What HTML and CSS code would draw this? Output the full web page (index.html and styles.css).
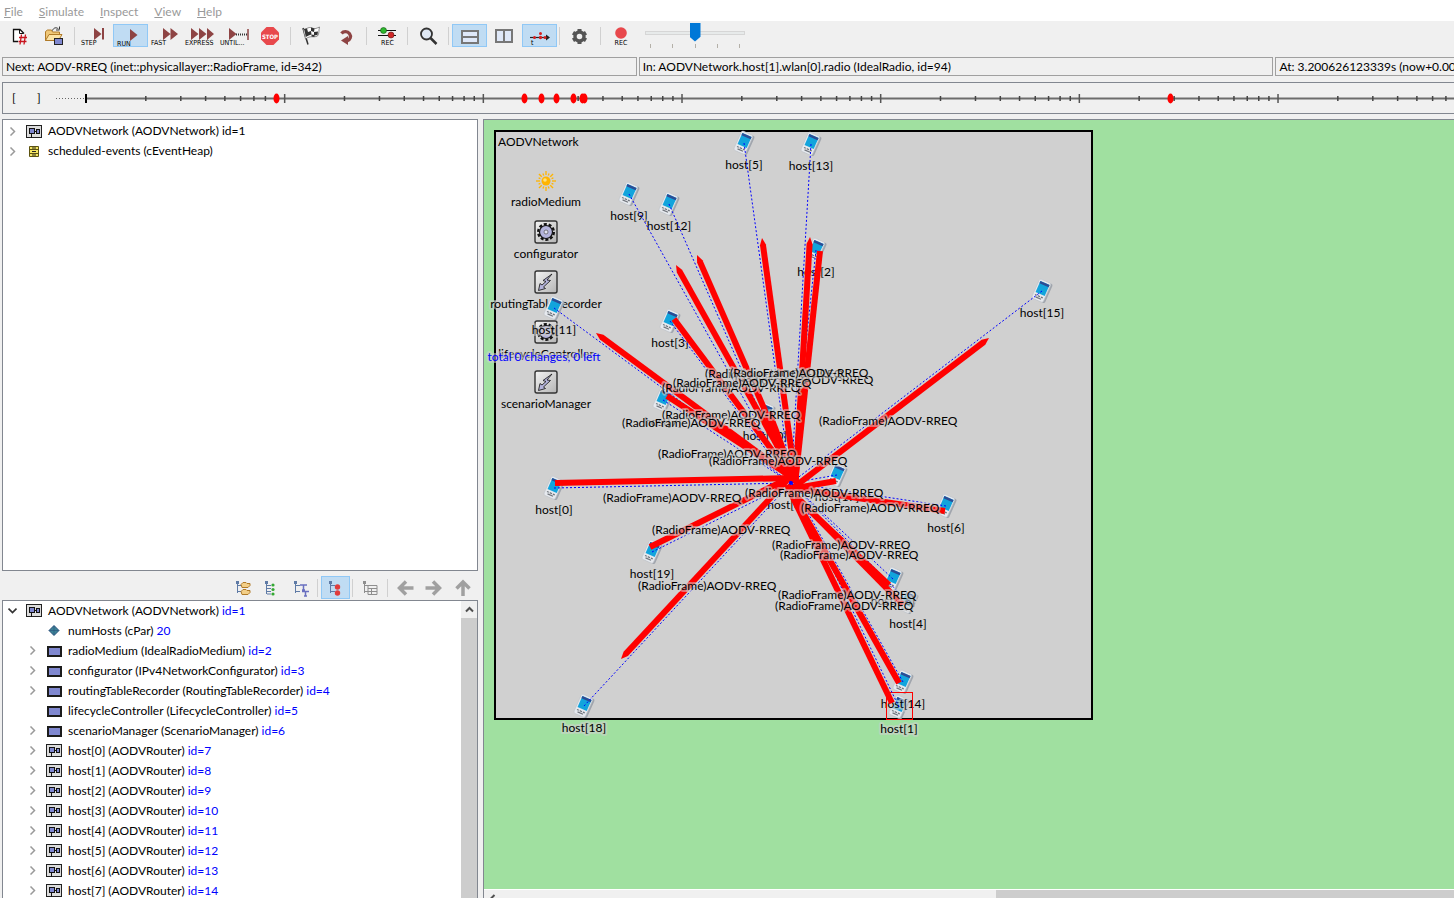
FILE: index.html
```html
<!DOCTYPE html>
<html lang="en">
<head>
    <meta charset="utf-8">
    <meta name="viewport" content="width=device-width">
    <title>AODVNetwork</title>
    <link rel="stylesheet" href="styles.css">
</head>
<body>
<svg class="defs" aria-hidden="true">
    <defs>
        <linearGradient id="metal" x1="0" y1="0" x2="1" y2="1">
            <stop offset="0" stop-color="#f4f4f4"/>
            <stop offset="1" stop-color="#b4b4b4"/>
        </linearGradient>
        <symbol id="net" viewBox="0 0 16 13">
            <rect x=".5" y=".5" width="15" height="12" fill="#dcdcdc" stroke="#222"/>
            <rect x="3.5" y="3.5" width="5" height="5" fill="#8088d0" stroke="#111"/>
            <rect x="10.5" y="4.5" width="3" height="4" fill="#8088d0" stroke="#111"/>
            <path d="M8 6.500h3M5.500 9v4" stroke="#111"/>
        </symbol>
        <symbol id="module" viewBox="0 0 16 13">
            <rect x="2" y="3" width="13" height="9" fill="#8088d0" stroke="#1c1c1c" stroke-width="2"/>
        </symbol>
        <symbol id="par" viewBox="0 0 16 13">
            <path d="M8 1.500l5 5-5 5-5-5z" fill="#3c8296" stroke="#28507c"/>
            <path d="M3 6.500h10M8 2v9" stroke="#28507c" stroke-width=".6"/>
        </symbol>
        <symbol id="heap" viewBox="0 0 16 13">
            <path d="M3.500 1.500h9v10h-9z" fill="#f5e663" stroke="#5c5310"/>
            <path d="M4 4.500h8M4 8.500h8" stroke="#5c5310"/>
            <path d="M6 3h4M6 6.500h4M6 10h4" stroke="#222"/>
        </symbol>
        <symbol id="closed" viewBox="0 0 9 9"><path d="M2.500 .5l4 4-4 4" fill="none" stroke="#9a9a9a" stroke-width="1.500"/></symbol>
        <symbol id="opened" viewBox="0 0 9 9"><path d="M.5 2.500l4 4 4-4" fill="none" stroke="#333" stroke-width="1.700"/></symbol>
        <symbol id="branch" viewBox="0 0 29 23">
            <path d="M9.500 7v10M10 9.500h4M10 15.500h4" fill="none" stroke="#5f7ba6"/>
            <rect x="8" y="5" width="3" height="3" fill="#5f7ba6"/>
        </symbol>
    </defs>
</svg>

<nav class="menubar">
    <button><u>F</u>ile</button>
    <button><u>S</u>imulate</button>
    <button><u>I</u>nspect</button>
    <button><u>V</u>iew</button>
    <button><u>H</u>elp</button>
</nav>

<div class="toolbar">
    <button class="tool" aria-label="New run"><svg viewBox="0 0 35 23">
        <path d="M16 17.500h-4.500v-12h6.500l4 4" fill="#fff" stroke="#111" stroke-width="1.300"/><path d="M17.500 5.500v4h4" fill="none" stroke="#111"/>
        <path d="M19.500 10.500l-1.500 10M23.500 10.500l-1.500 10M17 13.500h8M16.500 17.500h8" stroke="#c8141e" stroke-width="1.300"/></svg></button>
    <button class="tool" aria-label="Open"><svg viewBox="0 0 35 23">
        <path d="M8.500 16.500v-9l2-1.500h4l1 2h7v8z" fill="#f0c878" stroke="#b07a28"/><path d="M8.500 16.500l3.500-6h13l-3.500 6z" fill="#fbe3a6" stroke="#b07a28"/>
        <path d="M15.500 6.500c1-3 4-3.500 6-1.500M22.500 5.500v-3M22.500 6h-3.500" fill="none" stroke="#333"/>
        <rect x="17.500" y="14.500" width="8" height="6" fill="#8088d0" stroke="#222"/></svg></button>
    <span class="sep"></span>
    <button class="tool" aria-label="Step"><svg viewBox="0 0 35 23">
        <path d="M16 4l7.500 6-7.500 6z" class="play"/><path d="M25 4v11.500" stroke="#8e4444" stroke-width="2"/><text x="3" y="21">STEP</text></svg></button>
    <button class="tool on" aria-label="Run"><svg viewBox="0 0 35 23">
        <path d="M17 5l7.500 6-7.500 6z" class="play"/><text x="4" y="22">RUN</text></svg></button>
    <button class="tool" aria-label="Fast"><svg viewBox="0 0 35 23">
        <path d="M15 4l7.500 6-7.500 6zM22.500 4l7.500 6-7.500 6z" class="play"/><text x="3" y="21">FAST</text></svg></button>
    <button class="tool" aria-label="Express"><svg viewBox="0 0 35 23">
        <path d="M8 4l7.500 6-7.500 6zM16 4l7.500 6-7.500 6zM24 4l7 6-7 6z" class="play"/><text x="2" y="21">EXPRESS</text></svg></button>
    <button class="tool" aria-label="Until"><svg viewBox="0 0 35 23">
        <path d="M11 4l7.500 6-7.500 6z" class="play"/><path d="M18 10.500h11" stroke="#333" stroke-width="2" stroke-dasharray="1 1"/><path d="M30 5v11" stroke="#8e4444" stroke-width="1.500"/><text x="2" y="21">UNTIL...</text></svg></button>
    <button class="tool" aria-label="Stop"><svg viewBox="0 0 35 23">
        <path d="M13.500 3h7l5.500 5.500v7l-5.500 5.500h-7l-5.500-5.500v-7z" fill="#e8484c"/><text x="17" y="14.500" text-anchor="middle" class="stop">STOP</text></svg></button>
    <span class="sep"></span>
    <button class="tool" aria-label="Finish"><svg viewBox="0 0 35 23">
        <path d="M9 4l5 16.500" stroke="#333" stroke-width="1.500"/>
        <path d="M9 5c3 1.500 5-3 9-1 3 1.500 5 0 7.500-1-1 3 0 7-2 9-4 2-7-1-12 3z" fill="#fff" stroke="#444" stroke-width=".6"/>
        <path d="M10 5l3-.5 1 3.500-3 1zM17 3.500l3.500 1-.5 3.500-3-1zM14 8l3-1 .5 3.500-3 1zM20 8l4-.5-.5 3.500-3.500.5zM11 9l3-1 .7 3.500-3 1.500zM17.500 10.500l3 .5v2l-3-.5z" fill="#333"/></svg></button>
    <button class="tool" aria-label="Restart"><svg viewBox="0 0 35 23">
        <path d="M12.500 9.500a5 4.800 0 1 1 5.500 7.500" fill="none" stroke="#8e4444" stroke-width="3.300"/><path d="M19 12v9l-7-4.500z" fill="#8e4444"/></svg></button>
    <span class="sep"></span>
    <button class="tool" aria-label="Record eventlog"><svg viewBox="0 0 35 23">
        <path d="M8 6.500h18M8 11.500h18" stroke="#111" stroke-width="1.200"/><circle cx="13.500" cy="6.500" r="3" fill="#2db82d" stroke="#145214" stroke-width=".6"/><circle cx="21" cy="11" r="3" fill="#d02828" stroke="#5c1010" stroke-width=".6"/><text x="17.500" y="21" text-anchor="middle">REC</text></svg></button>
    <span class="sep"></span>
    <button class="tool" aria-label="Find"><svg viewBox="0 0 35 23">
        <circle cx="15.500" cy="10" r="5.500" fill="#dfe8f4" stroke="#333" stroke-width="1.800"/><path d="M19.500 14l6 6" stroke="#333" stroke-width="2.500"/></svg></button>
    <span class="sep"></span>
    <button class="tool on" aria-label="Vertical layout"><svg viewBox="0 0 35 23">
        <rect x="10" y="7" width="16" height="12" fill="#dfe8f8" stroke="#777" stroke-width="2"/><path d="M10 13h16" stroke="#777" stroke-width="2"/></svg></button>
    <button class="tool" aria-label="Horizontal layout"><svg viewBox="0 0 35 23">
        <rect x="9" y="6" width="16" height="12" fill="#dfe8f8" stroke="#777" stroke-width="2"/><path d="M17 6v12" stroke="#777" stroke-width="2"/></svg></button>
    <button class="tool on" aria-label="Show timeline"><svg viewBox="0 0 35 23">
        <path d="M8 13.500h17" stroke="#222" stroke-width="1.200"/><path d="M24 10.500l4 3-4 3z" fill="#222"/>
        <g fill="#d81e1e"><circle cx="12.500" cy="13.500" r="1.500"/><circle cx="18.500" cy="13.500" r="1.700"/><circle cx="23" cy="13.500" r="1.500"/><circle cx="18.500" cy="9.500" r="1.500"/></g>
        <text x="9" y="21">t</text></svg></button>
    <span class="sep"></span>
    <button class="tool" aria-label="Preferences"><svg viewBox="0 0 35 23">
        <circle cx="16.500" cy="12.500" r="4.500" fill="none" stroke="#555" stroke-width="3.400"/>
        <g stroke="#555" stroke-width="4"><path d="M16.500 5v2M16.500 18v2M10 8.700l2 1.200M21 15.100l2 1.200M10 16.300l2-1.200M21 9.900l2-1.200"/></g></svg></button>
    <span class="sep"></span>
    <button class="tool" aria-label="Record video"><svg viewBox="0 0 35 23">
        <circle cx="17" cy="9" r="5.800" fill="#e8484c"/><text x="17" y="21" text-anchor="middle">REC</text></svg></button>
    <div class="speed">
        <input type="range" min="0" max="100" value="50" aria-label="Animation speed">
        <div class="marks"><i></i><i></i><i></i><i></i><i></i></div>
    </div>
</div>

<div class="status">
    <div>Next: AODV-RREQ (inet::physicallayer::RadioFrame, id=342)</div>
    <div>In: AODVNetwork.host[1].wlan[0].radio (IdealRadio, id=94)</div>
    <div>At: 3.200626123339s (now+0.0000</div>
</div>

<svg class="timeline" id="timeline"></svg>

<div class="main">
    <aside class="side">
        <ul class="tree objects">
            <li><button class="toggle" aria-label="Expand"><svg><use href="#closed"/></svg></button><svg class="kind"><use href="#net"/></svg>AODVNetwork (AODVNetwork) id=1</li>
            <li><button class="toggle" aria-label="Expand"><svg><use href="#closed"/></svg></button><svg class="kind"><use href="#heap"/></svg>scheduled-events (cEventHeap)</li>
        </ul>

        <div class="treebar">
            <button class="tool" aria-label="Children"><svg viewBox="0 0 29 23"><use href="#branch"/>
                <path d="M13 8.500l2-2h3l1 1h3v2l-2 2h-6zM13 15.500l2-2h3l1 1h3v2l-2 2h-6z" fill="#f3cf88" stroke="#b07a28"/></svg></button>
            <button class="tool" aria-label="Flat"><svg viewBox="0 0 29 23"><use href="#branch"/><path d="M10 12.500h4M10 18h4M9.500 16v2" stroke="#5f7ba6"/>
                <g fill="#34a834"><circle cx="16" cy="9" r="1.600"/><circle cx="16" cy="13.500" r="1.600"/><circle cx="16" cy="18" r="1.600"/></g></svg></button>
            <button class="tool" aria-label="Types"><svg viewBox="0 0 29 23"><use href="#branch"/>
                <path d="M14 9h7M17.500 9v5M16 14h3M16 15.500h7M19.500 15.500v5M18 20h3" stroke="#6a70c0" stroke-width="1.500"/></svg></button>
            <span class="sep"></span>
            <button class="tool on" aria-label="Grouped"><svg viewBox="0 0 29 23"><use href="#branch"/>
                <circle cx="16.500" cy="11" r="2.700" fill="#e03c3c"/><circle cx="16.500" cy="17" r="2.700" fill="#e03c3c"/></svg></button>
            <span class="sep"></span>
            <button class="tool" aria-label="Table"><svg viewBox="0 0 29 23">
                <path d="M8.500 7v10M9 9.500h3M9 15.500h3M12 9.500h9v9h-9zM12 12.500h9M12 15.500h9M15.500 12.500v6" fill="none" stroke="#8e8e8e"/><path d="M7 5h3v3h-3z" fill="#8e8e8e"/></svg></button>
            <span class="sep"></span>
            <button class="tool arrow" aria-label="Back"><svg viewBox="0 0 29 23"><path d="M22.500 12h-14M15 5.500l-6.500 6.500 6.500 6.500"/></svg></button>
            <button class="tool arrow" aria-label="Forward"><svg viewBox="0 0 29 23"><path d="M5.500 12h14M13 5.500l6.500 6.500-6.500 6.500"/></svg></button>
            <button class="tool arrow" aria-label="Up"><svg viewBox="0 0 29 23"><path d="M14 20v-13M7.500 12.500l6.500-6.500 6.500 6.500"/></svg></button>
        </div>

        <div class="tree inspector">
            <ul>
                <li><button class="toggle" aria-label="Collapse"><svg><use href="#opened"/></svg></button><svg class="kind"><use href="#net"/></svg>AODVNetwork (AODVNetwork)&nbsp;<b>id=1</b></li>
                <li class="child"><span class="toggle"></span><svg class="kind"><use href="#par"/></svg>numHosts (cPar)&nbsp;<b>20</b></li>
                <li class="child"><button class="toggle" aria-label="Expand"><svg><use href="#closed"/></svg></button><svg class="kind"><use href="#module"/></svg>radioMedium (IdealRadioMedium)&nbsp;<b>id=2</b></li>
                <li class="child"><button class="toggle" aria-label="Expand"><svg><use href="#closed"/></svg></button><svg class="kind"><use href="#module"/></svg>configurator (IPv4NetworkConfigurator)&nbsp;<b>id=3</b></li>
                <li class="child"><button class="toggle" aria-label="Expand"><svg><use href="#closed"/></svg></button><svg class="kind"><use href="#module"/></svg>routingTableRecorder (RoutingTableRecorder)&nbsp;<b>id=4</b></li>
                <li class="child"><span class="toggle"></span><svg class="kind"><use href="#module"/></svg>lifecycleController (LifecycleController)&nbsp;<b>id=5</b></li>
                <li class="child"><button class="toggle" aria-label="Expand"><svg><use href="#closed"/></svg></button><svg class="kind"><use href="#module"/></svg>scenarioManager (ScenarioManager)&nbsp;<b>id=6</b></li>
                <li class="child"><button class="toggle" aria-label="Expand"><svg><use href="#closed"/></svg></button><svg class="kind"><use href="#net"/></svg>host[0] (AODVRouter)&nbsp;<b>id=7</b></li>
                <li class="child"><button class="toggle" aria-label="Expand"><svg><use href="#closed"/></svg></button><svg class="kind"><use href="#net"/></svg>host[1] (AODVRouter)&nbsp;<b>id=8</b></li>
                <li class="child"><button class="toggle" aria-label="Expand"><svg><use href="#closed"/></svg></button><svg class="kind"><use href="#net"/></svg>host[2] (AODVRouter)&nbsp;<b>id=9</b></li>
                <li class="child"><button class="toggle" aria-label="Expand"><svg><use href="#closed"/></svg></button><svg class="kind"><use href="#net"/></svg>host[3] (AODVRouter)&nbsp;<b>id=10</b></li>
                <li class="child"><button class="toggle" aria-label="Expand"><svg><use href="#closed"/></svg></button><svg class="kind"><use href="#net"/></svg>host[4] (AODVRouter)&nbsp;<b>id=11</b></li>
                <li class="child"><button class="toggle" aria-label="Expand"><svg><use href="#closed"/></svg></button><svg class="kind"><use href="#net"/></svg>host[5] (AODVRouter)&nbsp;<b>id=12</b></li>
                <li class="child"><button class="toggle" aria-label="Expand"><svg><use href="#closed"/></svg></button><svg class="kind"><use href="#net"/></svg>host[6] (AODVRouter)&nbsp;<b>id=13</b></li>
                <li class="child"><button class="toggle" aria-label="Expand"><svg><use href="#closed"/></svg></button><svg class="kind"><use href="#net"/></svg>host[7] (AODVRouter)&nbsp;<b>id=14</b></li>
            </ul>
            <div class="vscroll">
                <button aria-label="Scroll up"><svg viewBox="0 0 9 9"><path d="M1 6.500l3.500-3.500 3.500 3.500" fill="none" stroke="#505050" stroke-width="2"/></svg></button>
                <div class="thumb"></div>
            </div>
        </div>
    </aside>

    <section class="network">
        <svg class="canvas" id="canvas"></svg>
        <div class="hscroll">
            <button aria-label="Scroll left"><svg viewBox="0 0 9 9"><path d="M6.500 1l-3.500 3.500 3.500 3.500" fill="none" stroke="#505050" stroke-width="2"/></svg></button>
            <div class="thumb"></div>
        </div>
    </section>
</div>
<script src="network.js"></script>
</body>
</html>
```
FILE: styles.css
```css
* {
    box-sizing: border-box;
}

body {
    margin: 0;
    height: 100vh;
    display: flex;
    flex-direction: column;
    overflow: hidden;
    background: #f0f0f0;
    color: #000;
    font: 12px/16px Lato, "Open Sans", sans-serif;
}

button {
    margin: 0;
    padding: 0;
    border: 0;
    background: none;
    font: inherit;
    color: inherit;
}

.defs {
    position: absolute;
    width: 0;
    height: 0;
}

.menubar {
    flex: none;
    display: flex;
    gap: 16px;
    height: 21px;
    padding: 2px 4px 0;
    background: #fff;
    color: #999;
}

.toolbar {
    flex: none;
    display: flex;
    height: 36px;
    padding: 3px 2px 0;
}

.tool {
    flex: none;
    width: 35px;
    height: 23px;
}

.tool svg {
    display: block;
    width: 100%;
    height: 100%;
}

.tool text {
    font: 7px "DejaVu Sans Condensed", "DejaVu Sans", sans-serif;
}

.tool text.stop {
    font-size: 6px;
    font-weight: bold;
    fill: #fff;
}

.on {
    background: #c0dcf3;
    outline: 1px solid #90c8f6;
    outline-offset: -1px;
}

.play {
    fill: #8e4444;
}

.sep {
    flex: none;
    width: 1px;
    height: 18px;
    margin: 3px 3px 0 2px;
    background: #d0d0d0;
}

.speed {
    width: 100px;
    margin-left: 6px;
}

.speed input {
    display: block;
    width: 100%;
    height: 19px;
    margin: -1px 0 0;
    appearance: none;
    background: none;
}

.speed input::-webkit-slider-runnable-track {
    height: 4px;
    background: #e7eaea;
    border: 1px solid #d6d6d6;
}

.speed input::-webkit-slider-thumb {
    appearance: none;
    width: 11px;
    height: 19px;
    margin-top: -9px;
    background: #0078d7;
    clip-path: polygon(0 0, 100% 0, 100% 75%, 50% 100%, 0 75%);
}

.marks {
    display: flex;
    justify-content: space-between;
    padding: 2px 5px 0;
}

.marks i {
    width: 1px;
    height: 4px;
    background: #b4b0a8;
}

.status {
    flex: none;
    display: grid;
    grid-template-columns: 32fr 32fr 9fr;
    gap: 2px;
    height: 19px;
    margin-left: 2px;
}

.status div {
    min-width: 0;
    padding: 1px 3px;
    border: 1px solid #a0a0a0;
    white-space: nowrap;
    overflow: hidden;
}

.status div:last-child {
    border-right: 0;
}

.timeline {
    flex: none;
    display: block;
    width: 100%;
    height: 32px;
    margin: 6px 0 5px 2px;
    border: 1px solid #828790;
}

.main {
    flex: 1;
    min-height: 0;
    display: grid;
    grid-template-columns: 476px 1fr;
    gap: 5px;
    padding-left: 2px;
}

.side {
    min-height: 0;
    display: grid;
    grid-template-rows: minmax(0, 91fr) 29px minmax(0, 60fr);
}

ul {
    margin: 0;
    padding: 0;
    list-style: none;
}

.tree {
    background: #fff;
    border: 1px solid #828790;
    overflow: hidden;
}

.objects {
    padding-top: 1px;
}

.tree li {
    display: flex;
    align-items: center;
    height: 20px;
    white-space: nowrap;
}

.tree .child {
    padding-left: 20px;
}

.tree b {
    font-weight: normal;
    color: #00f;
}

.toggle {
    width: 19px;
    height: 20px;
    display: flex;
    align-items: center;
    justify-content: center;
}

.toggle svg {
    width: 9px;
    height: 9px;
}

.kind {
    width: 16px;
    height: 13px;
    margin: 0 6px 0 4px;
}

.treebar {
    display: flex;
    justify-content: flex-end;
    padding-top: 5px;
}

.treebar .tool {
    width: 29px;
}

.arrow path {
    fill: none;
    stroke: #a0a0a0;
    stroke-width: 3.5px;
}

.inspector {
    display: flex;
    justify-content: space-between;
    border-bottom: 0;
}

.vscroll {
    width: 16px;
    display: flex;
    flex-direction: column;
    background: #f0f0f0;
}

.vscroll button {
    height: 17px;
}

.vscroll svg, .hscroll svg {
    display: block;
    width: 9px;
    height: 9px;
    margin: 0 auto;
}

.thumb {
    flex: 1;
    background: #cdcdcd;
}

.network {
    min-width: 0;
    min-height: 0;
    display: flex;
    flex-direction: column;
    border: 1px solid #828790;
    border-width: 1px 0 0 1px;
}

.canvas {
    flex: 1;
    min-height: 0;
    width: 100%;
    background: #a0e0a0;
}

.canvas text {
    paint-order: stroke;
    stroke: rgba(208, 208, 208, .55);
    stroke-width: 4px;
    stroke-linejoin: round;
}

.canvas .info {
    fill: #00f;
}

.link {
    stroke: #00f;
    stroke-width: 1px;
    stroke-dasharray: 2 2;
}

.frame {
    fill: #f00;
}

.hscroll {
    flex: none;
    display: flex;
    height: 9px;
    overflow: hidden;
    border-top: 1px solid #fff;
    background: #f0f0f0;
}

.hscroll button {
    width: 17px;
    padding-top: 4px;
}

.hscroll .thumb {
    margin-left: 51%;
}
```
FILE: network.js
```js
(function () {
    // source of the broadcast
    var src = [791, 483];

    // index, x, y, where the frame has got to, and whether it still has its head
    var hosts = [
        [5, 744, 143, 762, 238, 1],
        [13, 811, 144, 810, 237, 1],
        [9, 629, 194, 676, 265, 1],
        [12, 669, 204, 697, 255, 1],
        [2, 816, 250, 820, 251, 0],
        [15, 1042, 291, 989, 338, 1],
        [3, 670, 321, 674, 319, 0],
        [7, 663, 400, 667, 396, 0],
        [10, 765, 414, 769, 412, 0],
        [0, 554, 488, 555, 483, 0],
        [17, 837, 475, 836, 481, 0],
        [6, 946, 506, 945, 511, 0],
        [19, 652, 552, 650, 547, 0],
        [18, 584, 706, 621, 659, 1],
        [4, 908, 602, 903, 605, 0],
        [16, 893, 579, 889, 585, 0],
        [1, 899, 707, 892, 703, 0],
        [14, 903, 682, 899, 683, 0],
        [11, 554, 308, 596, 333, 1]
    ];

    var labels = [
        [705, 374], [735, 380], [662, 388], [673, 383], [730, 373],
        [662, 415], [622, 423], [819, 421], [658, 454], [709, 461],
        [603, 498], [801, 508], [745, 493], [652, 530], [772, 545],
        [780, 555], [638, 586], [778, 595], [775, 606]
    ];

    function text( x, y, s, anchor, cls ) {
        return '<text x="' + x + '" y="' + ( y + 4 ) + '" text-anchor="' + anchor + '" class="' + ( cls || '' ) + '">' + s + '</text>';
    }

    function pda( x, y ) {
        return '<g transform="translate(' + x + ' ' + y + ') rotate(24)">' +
            '<rect x="-5" y="-10.500" width="12.500" height="21" rx="2" fill="#a0a5ad"/>' +
            '<rect x="-7" y="-10.500" width="12.500" height="21" rx="2" fill="#e6e9ee" stroke="#c0c4ca" stroke-width=".6"/>' +
            '<rect x="-5.500" y="-8.500" width="10" height="12" fill="#12a4dc"/>' +
            '<rect x="-5.500" y="-8.500" width="10" height="2.500" fill="#2c4c94"/>' +
            '<path d="M-5 6h2M-2 6h2.500M1.500 6h2M-3.500 8h6" stroke="#70757c" stroke-width="1.200"/></g>';
    }

    function box( x, y, inner ) {
        return '<g transform="translate(' + x + ' ' + y + ')">' +
            '<rect x="-11" y="-11" width="22" height="22" rx="2" fill="url(#metal)" stroke="#333" stroke-width="1.400"/>' + inner + '</g>';
    }

    var gear = '<circle r="7.800" fill="none" stroke="#111" stroke-width="2.400" stroke-dasharray="3 1.900"/>' +
        '<circle r="6.500" fill="#b4b4dc" stroke="#111" stroke-width="1.200"/><circle r="2" fill="#e4e4f4" stroke="#555" stroke-width=".7"/>';
    var bolt = '<path d="M6-8l-9 6.500 3 1-4 3.500-2-1.500-1.500 7 7-2-2-1.500 7-6.500-3.500-.5z" fill="#b4b4dc" stroke="#222" stroke-width=".9"/>';

    function sun( x, y ) {
        var rays = '';
        for ( var i = 0; i < 16; i++ ) {
            rays += '<path d="M0-6v' + ( i % 2 ? -2 : -4 ) + '" transform="rotate(' + i * 22.5 + ')"/>';
        }
        return '<g transform="translate(' + x + ' ' + y + ')"><g stroke="#ffb400" stroke-width="1.300">' + rays +
            '</g><circle r="4.500" fill="#ffb400"/><circle cx="-1" cy="-1" r="1.800" fill="#ffe27a"/></g>';
    }

    // the frame runs beside the link, shifted sideways by the tip's distance from it
    function frame( h ) {
        var dx = h[1] - src[0], dy = h[2] - src[1];
        var len = Math.sqrt( dx * dx + dy * dy );
        dx /= len;
        dy /= len;
        var off = ( h[3] - src[0] ) * -dy + ( h[4] - src[1] ) * dx;
        var sx = src[0] - dy * off, sy = src[1] + dx * off;
        var nx = -dy * 3, ny = dx * 3;
        var back = h[5] ? 7 : 0;
        var bx = h[3] - dx * back, by = h[4] - dy * back;
        var pts = [[sx + nx, sy + ny], [bx + nx, by + ny], [h[3], h[4]], [bx - nx, by - ny], [sx - nx, sy - ny]];
        return '<polygon class="frame" points="' + pts.join( ' ' ) + '"/>';
    }

    var out = '<rect x="495" y="131" width="597" height="588" fill="#d0d0d0" stroke="#000" stroke-width="2"/>';
    out += text( 498, 142, 'AODVNetwork', 'start' );
    out += sun( 546, 181 ) + box( 546, 232, gear ) + box( 546, 282, bolt ) + box( 546, 332, gear ) + box( 546, 382, bolt );
    out += text( 546, 202, 'radioMedium', 'middle' );
    out += text( 546, 254, 'configurator', 'middle' );
    out += text( 546, 304, 'routingTableRecorder', 'middle' );
    out += text( 546, 354, 'lifecycleController', 'middle' );
    out += text( 546, 404, 'scenarioManager', 'middle' );

    out += text( src[0] - 5, 505, 'host[8]', 'middle' );
    hosts.forEach( function ( h ) {
        out += pda( h[1], h[2] );
        out += text( h[1], h[2] + 22, 'host[' + h[0] + ']', 'middle' );
    } );
    out += text( 544, 357, 'total 0 changes, 0 left', 'middle', 'info' );
    out += '<rect x="886.500" y="692.500" width="26" height="27" fill="none" stroke="#f00"/>';

    hosts.forEach( function ( h ) {
        out += '<path class="link" d="M' + h[1] + ' ' + h[2] + 'L' + src + '"/>';
    } );
    hosts.forEach( function ( h ) {
        out += frame( h );
    } );
    labels.forEach( function ( l ) {
        out += text( l[0], l[1], '(RadioFrame)AODV-RREQ', 'start' );
    } );
    out += '<circle cx="' + src[0] + '" cy="' + src[1] + '" r="2" fill="#00f"/>';
    document.getElementById( 'canvas' ).innerHTML = '<g transform="translate(-484 -120)">' + out + '</g>';

    // logarithmic time axis, one decade per 198.7 pixels
    var axis = '<path d="M53 15.500h30" stroke="#666" stroke-dasharray="1 2"/><path d="M83 15.500h4000" stroke="#6c6c6c" stroke-width="2"/>';
    axis += '<text x="9" y="19">[</text><text x="34" y="19">]</text>';
    for ( var d = 0; d < 12; d++ ) {
        var x0 = 83 + d * 198.67;
        axis += '<path d="M' + x0 + ' 11v9" stroke="' + ( d ? '#555' : '#000' ) + '" stroke-width="' + ( d ? 1.5 : 2 ) + '"/>';
        for ( var k = 2; k < 10; k++ ) {
            axis += '<path d="M' + ( x0 + 198.67 * Math.log10( k ) ) + ' 13v5" stroke="#444" stroke-width="1.500"/>';
        }
    }
    [276, 524, 541, 556, 573, 582, 584, 1170].forEach( function ( x ) {
        axis += '<ellipse cx="' + ( x - 2.5 ) + '" cy="15.500" rx="3" ry="5" fill="#f00"/>';
    } );
    document.getElementById( 'timeline' ).innerHTML = axis;
})();
```
